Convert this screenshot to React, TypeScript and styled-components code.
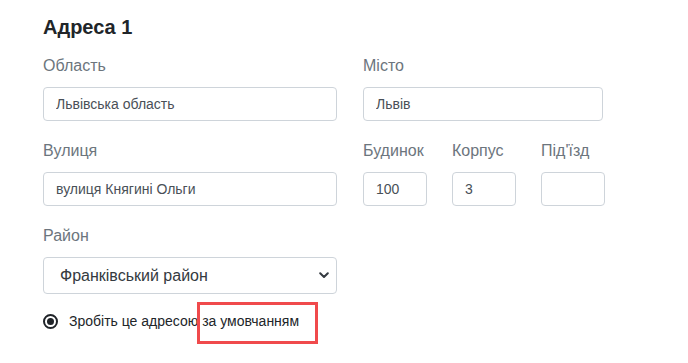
import React from "react";
import styled, { createGlobalStyle } from "styled-components";

const Global = createGlobalStyle`
  html, body { margin: 0; padding: 0; background: #ffffff; }
  body { font-family: "Liberation Sans", Arial, sans-serif; }
  * { box-sizing: border-box; }
`;

const Page = styled.div`
  position: relative;
  width: 688px;
  height: 363px;
  padding: 15px 0 0 43px;
  overflow: hidden;
`;

const Title = styled.h2`
  margin: 0 0 15px 0;
  font-size: 20px;
  line-height: 24px;
  font-weight: 700;
  color: #212529;
`;

const Grid = styled.div`
  display: grid;
  grid-template-columns: 294px 241px;
  column-gap: 26px;
`;

const Group = styled.div`
  display: flex;
  flex-direction: column;
  margin-bottom: 18px;
`;

const Label = styled.label`
  font-size: 16px;
  line-height: 24px;
  color: #6c757d;
  margin-bottom: 9px;
  white-space: nowrap;
`;

const Input = styled.input<{ $w?: number }>`
  width: ${(p) => (p.$w ? `${p.$w}px` : "100%")};
  height: 34px;
  padding: 0 12px;
  border: 1px solid #ced4da;
  border-radius: 4px;
  font-family: "Liberation Sans", Arial, sans-serif;
  font-size: 14px;
  color: #495057;
  background: #fff;
  outline: none;
`;

const Trio = styled.div`
  display: flex;
  gap: 25px;
`;

const SelectWrap = styled.div`
  position: relative;
  width: 100%;
`;

const Select = styled.select`
  width: 100%;
  height: 37px;
  padding: 0 30px 0 12px;
  border: 1px solid #ced4da;
  border-radius: 4px;
  font-family: "Liberation Sans", Arial, sans-serif;
  font-size: 16px;
  font-weight: 400;
  color: #343a40;
  background: #fff;
  appearance: none;
  -webkit-appearance: none;
  outline: none;
  text-indent: 4px;
`;

const Chevron = styled.svg`
  position: absolute;
  right: 8px;
  top: 15px;
  width: 10px;
  height: 7px;
  pointer-events: none;
`;

const RadioRow = styled.label`
  display: flex;
  align-items: center;
  gap: 11px;
  margin-top: -1px;
  font-size: 14px;
  line-height: 21px;
  color: #212529;
`;

const RadioDot = styled.span`
  display: inline-flex;
  align-items: center;
  justify-content: center;
  width: 15px;
  height: 15px;
  border: 2px solid #1f2328;
  border-radius: 50%;
  &::after {
    content: "";
    width: 7px;
    height: 7px;
    border-radius: 50%;
    background: #1f2328;
  }
`;

const Highlight = styled.div`
  position: absolute;
  left: 197px;
  top: 302px;
  width: 121px;
  height: 42px;
  border: 3px solid #f04a4c;
  pointer-events: none;
`;

export default function App() {
  return (
    <>
      <Global />
      <Page>
        <Title>Адреса 1</Title>
        <Grid>
          <Group>
            <Label>Область</Label>
            <Input defaultValue="Львівська область" />
          </Group>
          <Group>
            <Label>Місто</Label>
            <Input $w={240} defaultValue="Львів" />
          </Group>
          <Group>
            <Label>Вулиця</Label>
            <Input defaultValue="вулиця Княгині Ольги" />
          </Group>
          <Trio>
            <Group>
              <Label>Будинок</Label>
              <Input $w={64} defaultValue="100" />
            </Group>
            <Group>
              <Label>Корпус</Label>
              <Input $w={64} defaultValue="3" />
            </Group>
            <Group>
              <Label>Під'їзд</Label>
              <Input $w={64} defaultValue="" />
            </Group>
          </Trio>
          <Group>
            <Label>Район</Label>
            <SelectWrap>
              <Select defaultValue="fr">
                <option value="fr">Франківський район</option>
              </Select>
              <Chevron viewBox="0 0 10 7">
                <path d="M1.2 1.2 L5 5 L8.8 1.2" fill="none" stroke="#343a40" strokeWidth="2" strokeLinecap="round" strokeLinejoin="round" />
              </Chevron>
            </SelectWrap>
          </Group>
          <div />
        </Grid>
        <RadioRow>
          <RadioDot />
          Зробіть це адресою за умовчанням
        </RadioRow>
        <Highlight />
      </Page>
    </>
  );
}
